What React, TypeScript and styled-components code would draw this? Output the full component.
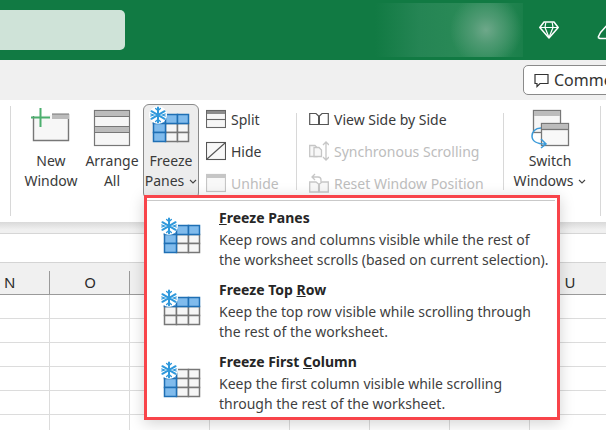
import React from "react";
import styled, { createGlobalStyle } from "styled-components";

const Global = createGlobalStyle`
  html, body { margin: 0; padding: 0; background: #fff; }
  body { font-family: "Noto Sans", "Open Sans", sans-serif; }
`;

const Page = styled.div`
  position: relative;
  width: 606px;
  height: 430px;
  overflow: hidden;
  background: #fff;
  color: #333;
  font-size: 14px;
`;

const TitleBar = styled.header`
  display: flex;
  align-items: center;
  height: 60px;
  background: #117a43;
`;
const SearchBox = styled.div`
  flex: none;
  width: 125px;
  height: 40px;
  background: #cfe3d8;
  border-radius: 0 5px 5px 0;
`;
const BlurredName = styled.div`
  flex: none;
  width: 148px;
  height: 54px;
  margin-left: 250px;
  background:
    radial-gradient(circle at 111px 27px, #6ea88a 0, #4f9a73 14px, rgba(42, 138, 87, 0) 36px),
    linear-gradient(90deg, #117a43 0, #258554 30%, #2a8a57 62%, #2a8a57 78%, #1a7f4a 100%);
`;
const Diamond = styled.svg`
  flex: none;
  width: 20px;
  height: 18px;
  margin-left: 16px;
`;
const Pen = styled.svg`
  flex: none;
  width: 20px;
  height: 20px;
  margin-left: 38px;
`;

const CommandStrip = styled.div`
  display: flex;
  height: 40px;
  padding: 5px 0 0 523px;
  box-sizing: border-box;
  background: #f0f0f0;
`;
const CommentButton = styled.div`
  flex: none;
  display: flex;
  align-items: center;
  gap: 5px;
  width: 120px;
  height: 30px;
  padding-left: 10px;
  box-sizing: border-box;
  background: #fff;
  border: 1px solid #8a8a8a;
  border-radius: 5px;
  font-size: 16px;
  color: #333;
`;

const Ribbon = styled.section`
  display: flex;
  height: 122px;
  padding: 4px 0 0 10px;
  box-sizing: border-box;
  background: #fff;
`;
const GroupRule = styled.div`
  flex: none;
  width: 1px;
  height: 110px;
  margin: 2px 0 0 ${(p) => p.$left}px;
  background: #d8d8d8;
`;
const InnerRule = styled.div`
  flex: none;
  width: 1px;
  height: 77px;
  margin: 9px 0 0 ${(p) => p.$left}px;
  background: #d8d8d8;
`;
const LargeButton = styled.div`
  flex: none;
  box-sizing: border-box;
  display: flex;
  flex-direction: column;
  align-items: center;
  width: ${(p) => p.$width}px;
  height: 95px;
  margin-left: ${(p) => p.$left}px;
`;
const PressedButton = styled(LargeButton)`
  background: #ededed;
  border: 1px solid #8a8a8a;
  border-radius: 6px;
`;
const Slot = styled.svg`
  flex: none;
  width: 48px;
  height: 47px;
`;
const PressedSlot = styled.div`
  flex: none;
  height: 46px;
  width: 100%;
  padding: 1px 0 0 5px;
  box-sizing: border-box;
`;
const LargeLabel = styled.div`
  line-height: 20px;
  text-align: center;
  white-space: nowrap;
  color: #3a3a3a;
`;
const Caret = styled.svg`
  width: 8px;
  height: 5px;
  margin-left: 5px;
  vertical-align: 2px;
`;
const SmallColumn = styled.div`
  flex: none;
  display: flex;
  flex-direction: column;
  width: ${(p) => p.$width}px;
  margin: -1px 0 0 ${(p) => p.$left}px;
`;
const SmallRow = styled.div`
  display: flex;
  align-items: center;
  gap: 5px;
  height: 32px;
  white-space: nowrap;
  color: ${(p) => (p.$off ? "#bdbdbd" : "#3a3a3a")};
`;
const SmallIcon = styled.svg`
  flex: none;
  width: 20px;
  height: 20px;
`;

const RibbonShadow = styled.div`
  height: 11px;
  background: linear-gradient(#d9d9d9, #f0f0f0 70%);
  border-bottom: 1px solid #d6d6d6;
`;
const FormulaBar = styled.div`
  height: 28px;
  background: #fff;
  border-bottom: 1px solid #d4d4d4;
`;
const Sheet = styled.div`
  display: grid;
  grid-template-columns: 50px repeat(7, 80px);
  width: 610px;
`;
const HeadCell = styled.div`
  height: 23px;
  padding-top: 8px;
  padding-left: ${(p) => (p.$first ? "4px" : "0")};
  line-height: 23px;
  text-align: ${(p) => (p.$first ? "left" : "center")};
  background:
    linear-gradient(#9a9a9a, #9a9a9a) right 8px / 1px 23px no-repeat,
    #f0f0f0;
  border-bottom: 1px solid #9a9a9a;
  font-size: 15px;
  color: #2b2b2b;
`;
const Cell = styled.div`
  box-sizing: border-box;
  height: 24px;
  border-right: 1px solid #dcdcdc;
  border-bottom: 1px solid #dcdcdc;
`;

const MenuFrame = styled.div`
  position: absolute;
  left: 144px;
  top: 195px;
  width: 416px;
  height: 225px;
  box-sizing: border-box;
  border: 3px solid #f8444a;
  background: #fff;
  box-shadow: 0 3px 14px rgba(0, 0, 0, 0.18);
`;
const MenuInner = styled.div`
  margin: 2px 2px 0 0;
  padding-top: 8px;
  border-top: 1px solid #c9c9c9;
`;
const MenuItem = styled.div`
  display: flex;
  height: 72px;
  padding-left: 13px;
`;
const MenuIcon = styled.div`
  flex: none;
  width: 42px;
  height: 38px;
  margin: 8px 17px 0 0;
`;
const MenuText = styled.div`
  margin-top: -1px;
  line-height: 20px;
  white-space: nowrap;
`;
const MenuTitle = styled.div`
  margin-bottom: 2px;
  font-weight: 700;
  color: #262626;
`;
const MenuLine = styled.div`
  color: #3f3f3f;
`;

const blue = "#1f6fb4";
const lightBlue = "#80bbec";
const gray = "#777";

const FreezeIcon: React.FC<{ variant: "all" | "row" | "col" }> = ({ variant }) => {
  const xs = [4.5, 16.5, 28.5];
  const ys = [8.5, 17.5, 26.5];
  const isBlue = (r: number, c: number) =>
    (variant !== "col" && r === 0) || (variant !== "row" && c === 0);
  const cells = ys.flatMap((y, r) => xs.map((x, c) => ({ x, y, r, c })));
  const order = [...cells].sort((a, b) => Number(isBlue(a.r, a.c)) - Number(isBlue(b.r, b.c)));
  return (
    <svg width="42" height="38" viewBox="0 0 42 38" fill="none">
      {order.map(({ x, y, r, c }) => (
        <rect
          key={`${r}-${c}`}
          x={x}
          y={y}
          width={c === 2 ? 11 : 12}
          height={9}
          fill={isBlue(r, c) ? lightBlue : "#f6f6f6"}
          stroke={isBlue(r, c) ? blue : gray}
          strokeWidth="1.5"
        />
      ))}
      <circle cx="9" cy="9" r="9" fill="#fff" />
      <g stroke="#2f98db" strokeWidth="2" strokeLinecap="round">
        <path d="M9 1.4V16.6M2.4 5.2L15.6 12.8M2.4 12.8L15.6 5.2" />
        <path strokeWidth="1.3" d="M6.6 2.4L9 4.6L11.4 2.4M6.6 15.6L9 13.4L11.4 15.6M1.8 8L4.6 9L1.8 10M16.2 8L13.4 9L16.2 10" />
      </g>
    </svg>
  );
};

const Chevron = () => (
  <Caret viewBox="0 0 8 5" fill="none">
    <path d="M1 1L4 4L7 1" stroke="#444" strokeWidth="1.1" />
  </Caret>
);

const cols = ["N", "O", "P", "Q", "R", "S", "T", "U"];

const items = [
  {
    variant: "all" as const,
    title: (
      <>
        <u>F</u>reeze Panes
      </>
    ),
    lines: [
      "Keep rows and columns visible while the rest of",
      "the worksheet scrolls (based on current selection).",
    ],
  },
  {
    variant: "row" as const,
    title: (
      <>
        Freeze Top <u>R</u>ow
      </>
    ),
    lines: ["Keep the top row visible while scrolling through", "the rest of the worksheet."],
  },
  {
    variant: "col" as const,
    title: (
      <>
        Freeze First <u>C</u>olumn
      </>
    ),
    lines: ["Keep the first column visible while scrolling", "through the rest of the worksheet."],
  },
];

export default function App() {
  return (
    <Page>
      <Global />
      <TitleBar>
        <SearchBox />
        <BlurredName />
        <Diamond viewBox="0 0 20 18" fill="none" stroke="#fff" strokeWidth="1.5" strokeLinejoin="round">
          <path d="M5 1H15L19.2 6.5L10 17L0.8 6.5Z" />
          <path d="M0.8 6.5H19.2M6.8 1.5L6 6.5L10 16.5L14 6.5L13.2 1.5" strokeWidth="1.2" />
        </Diamond>
        <Pen viewBox="0 0 20 20" fill="none" stroke="#fff" strokeWidth="1.5" strokeLinejoin="round">
          <path d="M1 17.5L3.5 12.5L14 1M1 17.5L3 18.5H18" />
        </Pen>
      </TitleBar>

      <CommandStrip>
        <CommentButton>
          <svg width="15" height="15" viewBox="0 0 15 15" fill="none" stroke="#333" strokeWidth="1.2">
            <path d="M1 1.5H14V10.5H6L3 13.5V10.5H1Z" />
          </svg>
          <span>Comments</span>
        </CommentButton>
      </CommandStrip>

      <Ribbon>
        <GroupRule $left={0} />
        <LargeButton $width={60} $left={10}>
          <Slot viewBox="0 0 48 47" fill="none">
            <path d="M6.5 12V36.5H41.5V10" fill="#f7f7f7" stroke={gray} strokeWidth="1.4" />
            <rect x="25" y="10" width="17" height="5" fill="#bcbcbc" />
            <path d="M25 10H42" stroke={gray} />
            <path d="M4 13.5H23M13.5 4V23" stroke="#4caf6e" strokeWidth="2" />
          </Slot>
          <LargeLabel>
            New
            <br />
            Window
          </LargeLabel>
        </LargeButton>
        <LargeButton $width={60} $left={1}>
          <Slot viewBox="0 0 48 47" fill="none" stroke={gray} strokeWidth="1.2">
            <rect x="6.5" y="6.5" width="35" height="35" fill="#f6f6f6" />
            <rect x="7" y="7" width="34" height="5" fill="#bcbcbc" stroke="none" />
            <rect x="7" y="23" width="34" height="5" fill="#bcbcbc" stroke="none" />
            <path d="M6.5 12.5H41.5M6.5 22.5H41.5M6.5 28.5H41.5" />
          </Slot>
          <LargeLabel>
            Arrange
            <br />
            All
          </LargeLabel>
        </LargeButton>
        <PressedButton $width={56} $left={1}>
          <PressedSlot>
            <FreezeIcon variant="all" />
          </PressedSlot>
          <LargeLabel>
            Freeze
            <br />
            Panes
            <Chevron />
          </LargeLabel>
        </PressedButton>

        <SmallColumn $width={90} $left={7}>
          <SmallRow>
            <SmallIcon viewBox="0 0 20 20" fill="none" stroke="#666" strokeWidth="1.1">
              <rect x="0.5" y="1.5" width="19" height="17" fill="#f6f6f6" />
              <rect x="1" y="2" width="18" height="3" fill="#8c8c8c" stroke="none" />
              <path d="M0.5 10.5H19.5" />
            </SmallIcon>
            Split
          </SmallRow>
          <SmallRow>
            <SmallIcon viewBox="0 0 20 20" fill="none" stroke="#555" strokeWidth="1.1">
              <rect x="0.5" y="1.5" width="19" height="17" fill="#f8f8f8" />
              <path d="M1 18L19 2" />
            </SmallIcon>
            Hide
          </SmallRow>
          <SmallRow $off>
            <SmallIcon viewBox="0 0 20 20" fill="none" stroke="#c6c6c6" strokeWidth="1.2">
              <rect x="0.5" y="1.5" width="19" height="17" fill="#f8f8f8" />
              <rect x="1" y="2" width="18" height="3" fill="#c6c6c6" stroke="none" />
            </SmallIcon>
            Unhide
          </SmallRow>
        </SmallColumn>
        <InnerRule $left={0} />

        <SmallColumn $width={194} $left={12}>
          <SmallRow>
            <SmallIcon viewBox="0 0 20 20" fill="#fff" stroke="#555" strokeWidth="1.2">
              <path d="M0.7 15.5V4.5H7L9.6 7V15.5Z" />
              <path d="M10.4 15.5V7L13 4.5H19.3V15.5Z" />
            </SmallIcon>
            View Side by Side
          </SmallRow>
          <SmallRow $off>
            <SmallIcon viewBox="0 0 20 20" fill="#f8f8f8" stroke="#c6c6c6" strokeWidth="1.3">
              <path d="M0.7 15.5V4.5H6L8 6.5V15.5Z" />
              <path d="M5 15.5V6.5H10L12.5 9V15.5Z" />
              <path d="M17 1V19M14 4L17 1L20 4M14 16L17 19L20 16" fill="none" />
            </SmallIcon>
            Synchronous Scrolling
          </SmallRow>
          <SmallRow $off>
            <SmallIcon viewBox="0 0 20 20" fill="#f8f8f8" stroke="#c6c6c6" strokeWidth="1.3">
              <path d="M0.7 19V9H7L9.6 11V19Z" />
              <path d="M10.4 19V11L13 9H19.3V19Z" />
              <path d="M6 1L3 4L6 7M3 4H9Q12 4 12 7V9" fill="none" />
            </SmallIcon>
            Reset Window Position
          </SmallRow>
        </SmallColumn>
        <InnerRule $left={0} />

        <LargeButton $width={68} $left={12}>
          <Slot viewBox="0 0 48 47" fill="none" stroke={gray} strokeWidth="1.3">
            <rect x="7.5" y="6.5" width="27" height="22" fill="#f6f6f6" />
            <rect x="8" y="7" width="26" height="5" fill="#bcbcbc" stroke="none" />
            <rect x="15.5" y="19.5" width="27" height="22" fill="#f8f8f8" />
            <rect x="16" y="20" width="26" height="5" fill="#bcbcbc" stroke="none" />
            <path d="M15.5 25.5H42.5" />
            <path
              d="M15 24C9 24 6 28 6 32C6 37 11 40 19 40M15 35L20 40L15 44"
              stroke="#3a9ad9"
              strokeWidth="1.5"
            />
          </Slot>
          <LargeLabel>
            Switch
            <br />
            Windows
            <Chevron />
          </LargeLabel>
        </LargeButton>
        <GroupRule $left={16} />
      </Ribbon>

      <RibbonShadow />
      <FormulaBar />

      <Sheet>
        {cols.map((c, i) => (
          <HeadCell key={c} $first={i === 0}>
            {c}
          </HeadCell>
        ))}
        {Array.from({ length: 6 * cols.length }, (_, i) => (
          <Cell key={i} />
        ))}
      </Sheet>

      <MenuFrame>
        <MenuInner>
          {items.map((it) => (
            <MenuItem key={it.variant}>
              <MenuIcon>
                <FreezeIcon variant={it.variant} />
              </MenuIcon>
              <MenuText>
                <MenuTitle>{it.title}</MenuTitle>
                {it.lines.map((l) => (
                  <MenuLine key={l}>{l}</MenuLine>
                ))}
              </MenuText>
            </MenuItem>
          ))}
        </MenuInner>
      </MenuFrame>
    </Page>
  );
}
